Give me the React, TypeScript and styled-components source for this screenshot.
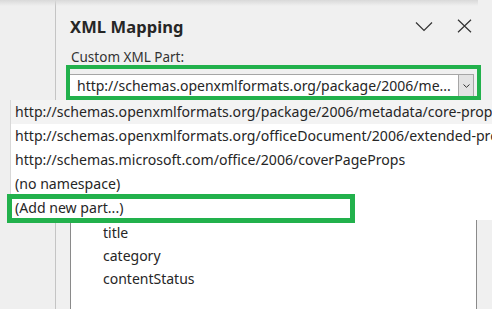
import React from "react";
import styled, { createGlobalStyle } from "styled-components";

const Global = createGlobalStyle`
  html, body { margin: 0; padding: 0; background: #f0f0f0; }
  body { font-family: "Noto Sans", "Open Sans", sans-serif; color: #262626; }
`;

const GREEN = "#22b14c";

const Page = styled.div`
  position: relative;
  width: 492px;
  height: 309px;
  overflow: hidden;
  display: flex;
  background: #f0f0f0;
`;

const LeftStrip = styled.div`
  width: 55px;
  flex: none;
  background: #efefef;
  border-right: 1px solid #c4c4c4;
`;

const TopShadow = styled.div`
  position: absolute;
  left: 0;
  top: 0;
  width: 478px;
  height: 6px;
  background: linear-gradient(#d9d9d9, rgba(240, 240, 240, 0));
  pointer-events: none;
`;

const Panel = styled.div`
  flex: 1;
  display: flex;
  flex-direction: column;
  padding: 0 10px 0 10px;
  min-width: 0;
`;

const Header = styled.div`
  display: flex;
  align-items: center;
  height: 38px;
  padding: 14px 10px 0 4px;
  box-sizing: border-box;
`;

const Title = styled.h1`
  flex: 1;
  margin: 0;
  font-size: 16.5px;
  font-weight: 700;
  color: #262626;
  letter-spacing: 0.1px;
`;

const IconButton = styled.button<{ $w: number; $ml: number }>`
  border: 0;
  background: transparent;
  padding: 0;
  display: flex;
  align-items: center;
  justify-content: center;
  width: ${(p) => p.$w}px;
  height: 20px;
  color: #333;
  margin-left: ${(p) => p.$ml}px;
`;

const Label = styled.div`
  margin: 10px 0 0 5px;
  font-size: 13.5px;
  color: #333;
  line-height: 18px;
`;

const Highlight = styled.div`
  border: 4px solid ${GREEN};
  padding: 5px 3px 0 0;
  margin-top: -1px;
  height: 35px;
  box-sizing: border-box;
  margin-right: 1px;
`;

const Combo = styled.div`
  display: flex;
  height: 22px;
  background: #fff;
  border-top: 1px solid #a6a6a6;
  border-right: 1px solid #a6a6a6;
  box-sizing: border-box;
`;

const ComboText = styled.div`
  flex: 1;
  padding-left: 7px;
  font-size: 14px;
  line-height: 21px;
  white-space: nowrap;
  overflow: hidden;
  color: #262626;
`;

const ComboButton = styled.div`
  width: 14px;
  background: #e3e3e3;
  border-left: 1px solid #a6a6a6;
  display: flex;
  align-items: center;
  justify-content: center;
`;

const Tree = styled.div`
  margin: 7px 5px 0 4px;
  flex: 1;
  background: #fff;
  border-left: 1px solid #8a8a8a;
  border-right: 1px solid #8a8a8a;
  padding: 114px 0 0 32px;
`;

const TreeItem = styled.div`
  font-size: 14px;
  line-height: 23px;
  color: #262626;
`;

const List = styled.div`
  position: absolute;
  left: 10px;
  top: 100px;
  width: 520px;
  background: #fff;
  border-left: 1px solid #d8d8d8;
  display: flex;
  flex-direction: column;
`;

const Option = styled.div<{ $hover?: boolean; $marked?: boolean }>`
  position: relative;
  height: 24px;
  line-height: 24px;
  padding-left: 4px;
  font-size: 14.1px;
  white-space: nowrap;
  color: #262626;
  background: ${(p) => (p.$hover ? "#f3f3f3" : "#fff")};
  ${(p) =>
    p.$marked
      ? `
    &::after {
      content: "";
      position: absolute;
      left: -4px;
      top: -2px;
      width: 338px;
      height: 19px;
      border: 5px solid ${GREEN};
    }
  `
      : ""}
`;

const options = [
  "http://schemas.openxmlformats.org/package/2006/metadata/core-properties",
  "http://schemas.openxmlformats.org/officeDocument/2006/extended-properties",
  "http://schemas.microsoft.com/office/2006/coverPageProps",
  "(no namespace)",
  "(Add new part...)",
];

export default function App() {
  return (
    <>
      <Global />
      <Page>
        <LeftStrip />
        <Panel>
          <Header>
            <Title>XML Mapping</Title>
            <IconButton $w={18} $ml={0} aria-label="Options">
              <svg width="18" height="11" viewBox="0 0 18 11">
                <path d="M1 1.5 L9 9.5 L17 1.5" fill="none" stroke="#333" strokeWidth="1.2" />
              </svg>
            </IconButton>
            <IconButton $w={15} $ml={24} aria-label="Close">
              <svg width="15" height="14" viewBox="0 0 15 14">
                <path d="M1 0.8 L14 13.2 M14 0.8 L1 13.2" fill="none" stroke="#333" strokeWidth="1.2" />
              </svg>
            </IconButton>
          </Header>
          <Label>Custom XML Part:</Label>
          <Highlight>
            <Combo>
              <ComboText>http://schemas.openxmlformats.org/package/2006/me...</ComboText>
              <ComboButton>
                <svg width="7" height="4" viewBox="0 0 7 4">
                  <path d="M0.5 0.5 L3.5 3.3 L6.5 0.5" fill="none" stroke="#333" strokeWidth="1" />
                </svg>
              </ComboButton>
            </Combo>
          </Highlight>
          <Tree>
            <TreeItem>title</TreeItem>
            <TreeItem>category</TreeItem>
            <TreeItem>contentStatus</TreeItem>
          </Tree>
        </Panel>
        <TopShadow />
        <List>
          {options.map((o, i) => (
            <Option key={o} $hover={i === 0} $marked={i === 4}>
              {o}
            </Option>
          ))}
        </List>
      </Page>
    </>
  );
}
